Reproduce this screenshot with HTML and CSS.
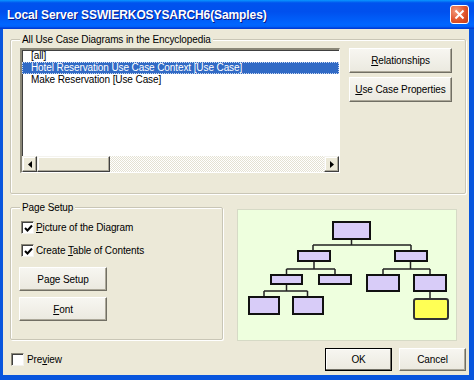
FILE: index.html
```html
<!DOCTYPE html>
<html lang="en">
<head>
  <meta charset="UTF-8" />
  <title>Local Server SSWIERKOSYSARCH6(Samples)</title>
  <link rel="stylesheet" href="styles.css">
</head>
<body>
  <div class="window">
    <div class="titlebar">
      <span class="title">Local Server SSWIERKOSYSARCH6(Samples)</span>
      <span class="close">
        <svg width="11" height="11" viewBox="0 0 11 11"><path d="M1.5 1.5 L9.5 9.5 M9.5 1.5 L1.5 9.5" stroke="#fff" stroke-width="2" /></svg>
      </span>
    </div>

    <div class="client">
      <div class="group group-diagrams">
        <span class="group-title">All Use Case Diagrams in the Encyclopedia</span>
        <div class="listbox">
          <ul class="items">
            <li>[all]</li>
            <li class="selected">Hotel Reservation Use Case Context [Use Case]</li>
            <li>Make Reservation [Use Case]</li>
          </ul>
          <div class="hscroll">
            <span class="sb-btn">
              <svg width="4" height="7" viewBox="0 0 4 7"><path d="M4 0 L0 3.5 L4 7 Z" fill="#000" /></svg>
            </span>
            <span class="sb-thumb"></span>
            <span class="sb-track"></span>
            <span class="sb-btn">
              <svg width="4" height="7" viewBox="0 0 4 7"><path d="M0 0 L4 3.5 L0 7 Z" fill="#000" /></svg>
            </span>
          </div>
        </div>
        <div class="side-buttons">
          <button class="btn btn-side"><u>R</u>elationships</button>
          <button class="btn btn-side"><u>U</u>se Case Properties</button>
        </div>
      </div>

      <div class="lower">
        <div class="group group-setup">
          <span class="group-title">Page Setup</span>
          <label class="check">
            <span class="box"><svg width="9" height="9" viewBox="0 0 9 9"><path d="M1 4 L3.5 6.5 L8 1.5" stroke="#000" stroke-width="2" fill="none" /></svg></span>
            <span><u>P</u>icture of the Diagram</span>
          </label>
          <label class="check check-second">
            <span class="box"><svg width="9" height="9" viewBox="0 0 9 9"><path d="M1 4 L3.5 6.5 L8 1.5" stroke="#000" stroke-width="2" fill="none" /></svg></span>
            <span>Create <u>T</u>able of Contents</span>
          </label>
          <button class="btn btn-setup btn-first">Pa<u>g</u>e Setup</button>
          <button class="btn btn-setup btn-font"><u>F</u>ont</button>
        </div>

        <div class="preview-pane">
          <svg width="218" height="130" viewBox="238 210 218 130">
            <g stroke="#222" stroke-width="1.5" fill="none">
              <path d="M351.5 240 V245 M313 245 H411 M313 245 V251 M411 245 V251" />
              <path d="M314 262 V269 M286.5 269 H335 M286.5 269 V275 M335 269 V275" />
              <path d="M410.5 262 V269 M383 269 H430 M383 269 V275 M430 269 V275" />
              <path d="M286.5 284 V291 M264 291 H307.5 M264 291 V297 M307.5 291 V297" />
              <path d="M430 292 V299" />
            </g>
            <g stroke="#111" stroke-width="2" fill="#d8ccf8">
              <rect x="333" y="222" width="37" height="17" />
              <rect x="298" y="251" width="32" height="10" />
              <rect x="395" y="251" width="32" height="10" />
              <rect x="271" y="275" width="31" height="9" />
              <rect x="319" y="275" width="32" height="9" />
              <rect x="367" y="275" width="32" height="16" />
              <rect x="414" y="275" width="32" height="16" />
              <rect x="249" y="297" width="30" height="17" />
              <rect x="293" y="297" width="30" height="17" />
            </g>
            <rect x="414" y="299" width="34" height="20" rx="2" fill="#ffff55" stroke="#333" stroke-width="2" />
          </svg>
        </div>
      </div>

      <div class="footer">
        <label class="check check-preview">
          <span class="box"></span>
          <span>Pre<u>v</u>iew</span>
        </label>
        <div class="dialog-buttons">
          <button class="btn btn-dialog btn-default">OK</button>
          <button class="btn btn-dialog">Cancel</button>
        </div>
      </div>
    </div>
  </div>
</body>
</html>
```

FILE: styles.css
```css
body {
  margin: 0;
  font-family: "Liberation Sans", Arial, sans-serif;
  font-size: 10px;
  letter-spacing: -0.1px;
  color: #000;
}

.window {
  width: 474px;
  height: 380px;
  box-sizing: border-box;
  background: #0855dd;
  padding: 0 5px 5px 3px;
  display: flex;
  flex-direction: column;
}

.titlebar {
  height: 29px;
  margin: 0 -5px 0 -3px;
  padding: 0 6px 0 7px;
  display: flex;
  align-items: center;
  justify-content: space-between;
  background: linear-gradient(to bottom, #0997ff 0%, #0053ee 10%, #0050ee 40%, #0066ff 85%, #0060f8 92%, #003dd7 97%, #003dd7 100%);
}

.title {
  color: #fff;
  font-weight: bold;
  font-size: 12px;
  letter-spacing: -0.1px;
  text-shadow: 1px 1px 0 #0a1883;
  margin-top: 1px;
}

.close {
  width: 19px;
  height: 19px;
  box-sizing: border-box;
  border: 1px solid #fff;
  border-radius: 3px;
  background: radial-gradient(circle at 30% 30%, #f39a7c 0%, #e0542c 55%, #c33a14 100%);
  display: flex;
  align-items: center;
  justify-content: center;
  margin-top: -1px;
  margin-right: -1px;
}

.client {
  flex: 1;
  background: #ece9d8;
  padding: 10px 3px 0 7px;
}

.group {
  position: relative;
  box-sizing: border-box;
  border: 1px solid #c9c6b6;
  border-radius: 2px;
  box-shadow: inset 1px 1px 0 #fff, 1px 1px 0 #fff;
}

.group-title {
  position: absolute;
  top: -7px;
  left: 9px;
  padding: 0 2px;
  background: #ece9d8;
  line-height: 13px;
}

.group-diagrams {
  width: 456px;
  height: 155px;
  padding: 8px 0 0 9px;
  display: flex;
  align-items: flex-start;
}

.listbox {
  width: 320px;
  height: 125px;
  box-sizing: border-box;
  background: #fff;
  border-top: 2px solid #8a8778;
  border-left: 2px solid #8a8778;
  border-right: 1px solid #fff;
  border-bottom: 1px solid #fff;
  box-shadow: inset 1px 1px 0 #404040;
  display: flex;
  flex-direction: column;
}

.items {
  list-style: none;
  margin: 0;
  padding: 0;
  flex: 1;
}

.items li {
  height: 12px;
  line-height: 12px;
  padding-left: 9px;
  white-space: nowrap;
}

.items li.selected {
  background: #316ac5;
  color: #fff;
  outline: 1px dotted #c9d8f0;
  outline-offset: -1px;
}

.hscroll {
  height: 16px;
  display: flex;
}

.sb-btn,
.sb-thumb {
  box-sizing: border-box;
  height: 16px;
  background: #ece9d8;
  border-top: 1px solid #f4f3ee;
  border-left: 1px solid #f4f3ee;
  border-right: 1px solid #404040;
  border-bottom: 1px solid #404040;
  box-shadow: inset -1px -1px 0 #aca899, inset 1px 1px 0 #fff;
}

.sb-btn {
  width: 15px;
  display: flex;
  align-items: center;
  justify-content: center;
}

.sb-thumb {
  width: 73px;
}

.sb-track {
  flex: 1;
  background: repeating-conic-gradient(#fff 0 25%, #e4e1d2 0 50%) 0 0 / 2px 2px;
}

.side-buttons {
  margin-left: 9px;
  display: flex;
  flex-direction: column;
  gap: 4px;
}

.btn {
  font-family: "Liberation Sans", Arial, sans-serif;
  font-size: 10px;
  letter-spacing: -0.1px;
  white-space: nowrap;
  color: #000;
  padding: 0;
  box-sizing: border-box;
  background: linear-gradient(to bottom, #f7f6f1, #ebe9df);
  border-top: 1px solid #fff;
  border-left: 1px solid #fff;
  border-right: 1px solid #716f64;
  border-bottom: 1px solid #716f64;
  box-shadow: inset -1px -1px 0 #aca899;
  display: block;
}

.btn-side {
  width: 103px;
  height: 25px;
}

.lower {
  margin-top: 13px;
  display: flex;
  align-items: flex-start;
}

.group-setup {
  width: 213px;
  height: 133px;
  padding: 11px 0 0 8px;
}

.check {
  display: flex;
  align-items: center;
  height: 17px;
  margin-left: 2px;
}

.check-second {
  margin-top: 6px;
}

.box {
  width: 13px;
  height: 13px;
  box-sizing: border-box;
  background: #fff;
  border-top: 1px solid #8a8778;
  border-left: 1px solid #8a8778;
  border-right: 1px solid #f4f3ee;
  border-bottom: 1px solid #f4f3ee;
  box-shadow: inset 1px 1px 0 #404040;
  margin-right: 2px;
  display: flex;
  align-items: center;
  justify-content: center;
}

.box svg {
  margin: 1px 0 0 1px;
}

.btn-setup {
  width: 88px;
  height: 24px;
}

.btn-first {
  margin-top: 8px;
}

.btn-font {
  margin-top: 6px;
}

.preview-pane {
  margin-top: 2px;
  margin-left: 14px;
  width: 220px;
  height: 132px;
  box-sizing: border-box;
  background: #eeffde;
  border: 1px solid #d6dac6;
}

.preview-pane svg {
  display: block;
}

.footer {
  margin-top: 7px;
  height: 23px;
  display: flex;
  align-items: center;
  justify-content: space-between;
}

.check-preview {
  margin-left: 1px;
}

.check-preview .box {
  margin-right: 3px;
}

.dialog-buttons {
  display: flex;
  gap: 7px;
}

.btn-dialog {
  width: 67px;
  height: 23px;
}

.btn-default {
  border: 1px solid #000;
  box-shadow: inset -1px -1px 0 #716f64, inset 1px 1px 0 #fff;
}
```
